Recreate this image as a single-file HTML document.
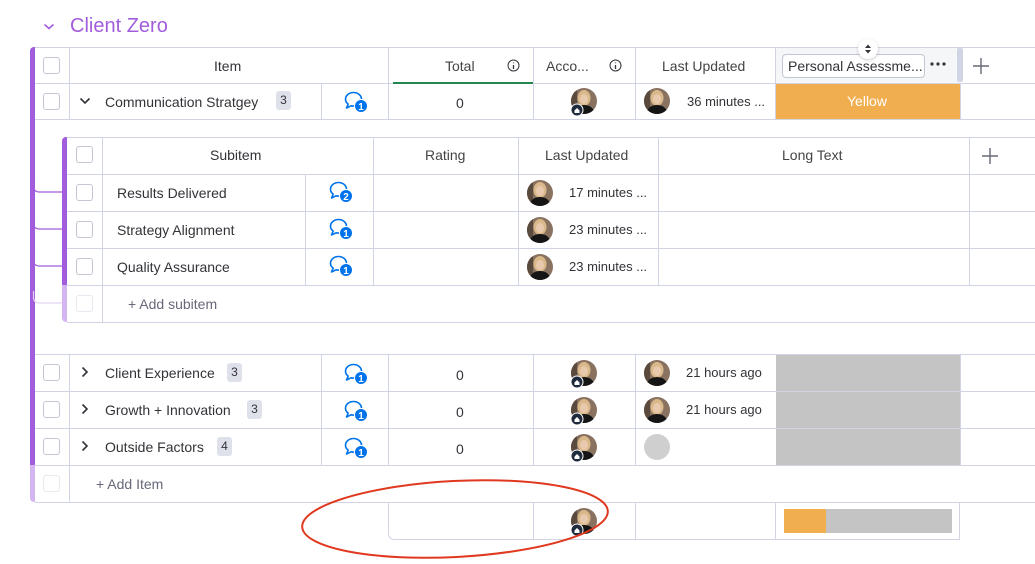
<!DOCTYPE html>
<html><head><meta charset="utf-8"><style>
*{box-sizing:border-box;margin:0;padding:0}
body{width:1035px;height:564px;background:#fff;font-family:"Liberation Sans",sans-serif;color:#323338;position:relative;overflow:hidden;font-size:14px}
.a{position:absolute}
.hl{position:absolute;height:1px;background:#d0d4e4}
.vl{position:absolute;width:1px;background:#d0d4e4}
.t{position:absolute;white-space:nowrap;line-height:1}
.cb{position:absolute;width:17px;height:17px;border:1px solid #c3c6d4;border-radius:3px;background:#fff}
.badge{position:absolute;background:#dfe1ea;border-radius:3px;font-size:12px;width:15px;height:19px;text-align:center;line-height:19px;color:#323338}
.hd{color:#444}
</style></head><body>
<svg width="0" height="0" style="position:absolute"><defs>
<g id="av"><clipPath id="cl"><circle cx="13" cy="13" r="13"/></clipPath><g clip-path="url(#cl)"><rect width="26" height="26" fill="#8a7260"/><rect x="0" y="0" width="6" height="26" fill="#5a4a3e"/><ellipse cx="13" cy="10" rx="6.5" ry="8" fill="#d9b98a"/><ellipse cx="13" cy="11" rx="4" ry="5" fill="#e9c9ae"/><path d="M2 26q2-9 11-9t11 9z" fill="#151515"/></g></g>
<path id="bub" d="M10.5 2.5C6 2.5 2.5 5.5 2.5 9.2c0 2 1 3.7 2.7 4.9L3.5 18l4.6-2.2c.8.2 1.6.3 2.4.3 4.5 0 8-3 8-6.8S15 2.5 10.5 2.5z" stroke="#0073ea" stroke-width="1.6" fill="none" stroke-linejoin="round"/>
</defs></svg>
<!-- title -->
<svg class="a" style="left:43px;top:22px" width="12" height="9"><path d="M1.5 2.5L6 6.5L10.5 2.5" stroke="#a25ddc" stroke-width="1.6" fill="none"/></svg>
<div class="t" style="left:70px;top:16px;font-size:20px;color:#a25ddc">Client Zero</div>

<div class="a" style="left:30px;top:47px;width:5px;height:418px;background:#a25ddc;border-radius:4px 0 0 0"></div>
<div class="a" style="left:30px;top:465px;width:5px;height:37px;background:#d3b6ef;border-radius:0 0 0 4px"></div>
<div class="hl" style="left:35px;top:47px;width:1000px"></div>
<div class="hl" style="left:35px;top:83px;width:1000px"></div>
<div class="hl" style="left:35px;top:119px;width:1000px"></div>
<div class="a" style="left:393px;top:82px;width:140px;height:2px;background:#258750"></div>
<div class="vl" style="left:69px;top:47px;height:72px"></div>
<div class="vl" style="left:388px;top:47px;height:72px"></div>
<div class="vl" style="left:533px;top:47px;height:72px"></div>
<div class="vl" style="left:635px;top:47px;height:72px"></div>
<div class="vl" style="left:775px;top:47px;height:72px"></div>
<div class="vl" style="left:960px;top:84px;height:35px"></div>
<div class="vl" style="left:321px;top:84px;height:35px"></div>
<div class="a" style="left:776px;top:48px;width:184px;height:35px;background:#f5f6f8"></div>
<div class="a" style="left:957px;top:48px;width:6px;height:34px;background:#d0d4e4;border-radius:2px"></div>
<div class="cb" style="left:43px;top:57px"></div>
<div class="t" style="left:214px;top:59px">Item</div>
<div class="t hd" style="left:445px;top:59px">Total</div>
<svg class="a" style="left:507px;top:59px" width="13" height="13"><circle cx="6.5" cy="6.5" r="5.5" stroke="#323338" fill="none"/><path d="M6.5 6v4M6.5 3.5v.8" stroke="#323338" stroke-width="1.3"/></svg>
<div class="t hd" style="left:546px;top:59px">Acco...</div>
<svg class="a" style="left:609px;top:59px" width="13" height="13"><circle cx="6.5" cy="6.5" r="5.5" stroke="#323338" fill="none"/><path d="M6.5 6v4M6.5 3.5v.8" stroke="#323338" stroke-width="1.3"/></svg>
<div class="t hd" style="left:662px;top:59px">Last Updated</div>
<div class="a" style="left:782px;top:54px;width:143px;height:24px;border:1px solid #c3c6d4;border-radius:4px;background:#fff"></div>
<div class="t" style="left:788px;top:59px">Personal Assessme...</div>
<svg class="a" style="left:930px;top:62px" width="16" height="4"><circle cx="2" cy="2" r="1.6" fill="#323338"/><circle cx="8" cy="2" r="1.6" fill="#323338"/><circle cx="14" cy="2" r="1.6" fill="#323338"/></svg>
<div class="a" style="left:858px;top:39px;width:20px;height:20px;border-radius:50%;background:#fff;box-shadow:0 1px 3px rgba(0,0,0,.2)"></div>
<svg class="a" style="left:863px;top:43px" width="10" height="12"><path d="M2 5L5 1.5L8 5ZM2 7L5 10.5L8 7Z" fill="#323338"/></svg>
<svg class="a" style="left:972px;top:57px" width="18" height="18"><path d="M9 1v16M1 9h16" stroke="#676879" stroke-width="1.4"/></svg>

<!-- row1 -->
<div class="cb" style="left:43px;top:93px"></div>
<svg class="a" style="left:79px;top:96px" width="12" height="10"><path d="M1.5 2.5L6 7L10.5 2.5" stroke="#323338" stroke-width="1.6" fill="none"/></svg>
<div class="t" style="left:105px;top:95px">Communication Stratgey</div>
<div class="badge" style="left:276px;top:91px">3</div>
<svg class="a" style="left:343px;top:90px" width="26" height="24"><use href="#bub"/><circle cx="18" cy="16" r="6.5" fill="#0073ea" stroke="#fff"/><text x="18" y="20" font-size="10" fill="#fff" text-anchor="middle" font-family="Liberation Sans" font-weight="bold">1</text></svg>
<div class="t" style="left:456px;top:96px">0</div>
<div class="a" style="left:776px;top:84px;width:184px;height:35px;background:#f0ae4f"></div>
<div class="t" style="left:847px;top:94px;color:#fff">Yellow</div>
<div class="t" style="left:687px;top:95px;font-size:13px">36 minutes ...</div>

<!-- subitem table -->
<div class="a" style="left:33px;top:119px;width:1.5px;height:234px;background:#a25ddc"></div>
<svg class="a" style="left:32px;top:180px" width="31" height="130"><g fill="none" stroke="#a25ddc" stroke-width="1.2"><path d="M1.5 0v6q0 6 6 6h23.5"/><path d="M1.5 37v6q0 6 6 6h23.5"/><path d="M1.5 74v6q0 6 6 6h23.5"/></g><path d="M1.5 111v6q0 6 6 6h23.5" stroke="#e2d3f3" stroke-width="1.2" fill="none"/></svg>
<div class="a" style="left:62px;top:137px;width:5px;height:148px;background:#a25ddc;border-radius:4px 0 0 0"></div>
<div class="a" style="left:62px;top:285px;width:5px;height:37px;background:#d3b6ef;border-radius:0 0 0 4px"></div>
<div class="hl" style="left:67px;top:137px;width:968px"></div>
<div class="hl" style="left:67px;top:174px;width:968px"></div>
<div class="hl" style="left:67px;top:211px;width:968px"></div>
<div class="hl" style="left:67px;top:248px;width:968px"></div>
<div class="hl" style="left:67px;top:285px;width:968px"></div>
<div class="hl" style="left:67px;top:322px;width:968px"></div>
<div class="vl" style="left:102px;top:137px;height:185px"></div>
<div class="vl" style="left:305px;top:174px;height:111px"></div>
<div class="vl" style="left:373px;top:137px;height:148px"></div>
<div class="vl" style="left:518px;top:137px;height:148px"></div>
<div class="vl" style="left:658px;top:137px;height:148px"></div>
<div class="vl" style="left:969px;top:137px;height:148px"></div>
<div class="cb" style="left:76px;top:146px"></div>
<div class="t" style="left:210px;top:148px">Subitem</div>
<div class="t hd" style="left:425px;top:148px">Rating</div>
<div class="t hd" style="left:545px;top:148px">Last Updated</div>
<div class="t hd" style="left:782px;top:148px">Long Text</div>
<svg class="a" style="left:981px;top:147px" width="18" height="18"><path d="M9 1v16M1 9h16" stroke="#676879" stroke-width="1.4"/></svg>

<div class="cb" style="left:76px;top:184px"></div>
<div class="t" style="left:117px;top:186px">Results Delivered</div>
<div class="cb" style="left:76px;top:221px"></div>
<div class="t" style="left:117px;top:223px">Strategy Alignment</div>
<div class="cb" style="left:76px;top:258px"></div>
<div class="t" style="left:117px;top:260px">Quality Assurance</div>
<div class="cb" style="left:76px;top:295px;border-color:#e6e9ef"></div>
<div class="t" style="left:128px;top:297px;color:#676879">+ Add subitem</div>

<svg class="a" style="left:328px;top:180px" width="26" height="24"><use href="#bub"/><circle cx="18" cy="16" r="6.5" fill="#0073ea" stroke="#fff"/><text x="18" y="20" font-size="10" fill="#fff" text-anchor="middle" font-family="Liberation Sans" font-weight="bold">2</text></svg>
<svg class="a" style="left:328px;top:217px" width="26" height="24"><use href="#bub"/><circle cx="18" cy="16" r="6.5" fill="#0073ea" stroke="#fff"/><text x="18" y="20" font-size="10" fill="#fff" text-anchor="middle" font-family="Liberation Sans" font-weight="bold">1</text></svg>
<svg class="a" style="left:328px;top:254px" width="26" height="24"><use href="#bub"/><circle cx="18" cy="16" r="6.5" fill="#0073ea" stroke="#fff"/><text x="18" y="20" font-size="10" fill="#fff" text-anchor="middle" font-family="Liberation Sans" font-weight="bold">1</text></svg>
<div class="t" style="left:569px;top:186px;font-size:13px">17 minutes ...</div>
<div class="t" style="left:569px;top:223px;font-size:13px">23 minutes ...</div>
<div class="t" style="left:569px;top:260px;font-size:13px">23 minutes ...</div>

<!-- lower rows -->
<div class="hl" style="left:35px;top:354px;width:1000px"></div>
<div class="hl" style="left:35px;top:391px;width:1000px"></div>
<div class="hl" style="left:35px;top:428px;width:1000px"></div>
<div class="hl" style="left:35px;top:465px;width:1000px"></div>
<div class="hl" style="left:35px;top:502px;width:1000px"></div>
<div class="vl" style="left:69px;top:354px;height:148px"></div>
<div class="vl" style="left:321px;top:354px;height:111px"></div>
<div class="vl" style="left:388px;top:354px;height:111px"></div>
<div class="vl" style="left:533px;top:354px;height:111px"></div>
<div class="vl" style="left:635px;top:354px;height:111px"></div>
<div class="vl" style="left:960px;top:354px;height:111px"></div>
<div class="a" style="left:776px;top:355px;width:184px;height:110px;background:#c4c4c4"></div>
<div class="hl" style="left:776px;top:391px;width:184px"></div>
<div class="hl" style="left:776px;top:428px;width:184px"></div>

<div class="cb" style="left:43px;top:364px"></div>
<div class="cb" style="left:43px;top:401px"></div>
<div class="cb" style="left:43px;top:438px"></div>
<div class="cb" style="left:43px;top:475px;border-color:#e6e9ef"></div>
<svg class="a" style="left:80px;top:366px" width="10" height="12"><path d="M2.5 1.5L7 6L2.5 10.5" stroke="#323338" stroke-width="1.6" fill="none"/></svg>
<svg class="a" style="left:80px;top:403px" width="10" height="12"><path d="M2.5 1.5L7 6L2.5 10.5" stroke="#323338" stroke-width="1.6" fill="none"/></svg>
<svg class="a" style="left:80px;top:440px" width="10" height="12"><path d="M2.5 1.5L7 6L2.5 10.5" stroke="#323338" stroke-width="1.6" fill="none"/></svg>
<div class="t" style="left:105px;top:366px">Client Experience</div>
<div class="badge" style="left:227px;top:363px">3</div>
<div class="t" style="left:105px;top:403px">Growth + Innovation</div>
<div class="badge" style="left:247px;top:400px">3</div>
<div class="t" style="left:105px;top:440px">Outside Factors</div>
<div class="badge" style="left:217px;top:437px">4</div>
<div class="t" style="left:96px;top:477px;color:#676879">+ Add Item</div>
<svg class="a" style="left:343px;top:362px" width="26" height="24"><use href="#bub"/><circle cx="18" cy="16" r="6.5" fill="#0073ea" stroke="#fff"/><text x="18" y="20" font-size="10" fill="#fff" text-anchor="middle" font-family="Liberation Sans" font-weight="bold">1</text></svg>
<svg class="a" style="left:343px;top:399px" width="26" height="24"><use href="#bub"/><circle cx="18" cy="16" r="6.5" fill="#0073ea" stroke="#fff"/><text x="18" y="20" font-size="10" fill="#fff" text-anchor="middle" font-family="Liberation Sans" font-weight="bold">1</text></svg>
<svg class="a" style="left:343px;top:436px" width="26" height="24"><use href="#bub"/><circle cx="18" cy="16" r="6.5" fill="#0073ea" stroke="#fff"/><text x="18" y="20" font-size="10" fill="#fff" text-anchor="middle" font-family="Liberation Sans" font-weight="bold">1</text></svg>
<div class="t" style="left:456px;top:368px">0</div>
<div class="t" style="left:456px;top:405px">0</div>
<div class="t" style="left:456px;top:442px">0</div>
<div class="t" style="left:686px;top:366px;font-size:13px">21 hours ago</div>
<div class="t" style="left:686px;top:403px;font-size:13px">21 hours ago</div>
<div class="a" style="left:644px;top:434px;width:26px;height:26px;border-radius:50%;background:#cfcfcf"></div>

<!-- summary row -->
<div class="a" style="left:388px;top:502px;width:572px;height:38px;border:1px solid #d0d4e4;border-top:none;border-radius:0 0 0 6px"></div>
<div class="vl" style="left:533px;top:502px;height:38px"></div>
<div class="vl" style="left:635px;top:502px;height:38px"></div>
<div class="vl" style="left:775px;top:502px;height:38px"></div>
<div class="a" style="left:784px;top:509px;width:168px;height:24px;background:#c4c4c4"></div>
<div class="a" style="left:784px;top:509px;width:42px;height:24px;background:#f0ae4f"></div>

<!-- avatars -->
<svg class="a" style="left:571px;top:88px" width="28" height="30"><use href="#av"/><circle cx="6" cy="22" r="6" fill="#1f2a3c" stroke="#fff"/><path d="M3.5 22.5L6 20l2.5 2.5v2.5h-5z" fill="#fff"/></svg>
<svg class="a" style="left:644px;top:88px" width="26" height="26"><use href="#av"/></svg>
<svg class="a" style="left:527px;top:180px" width="26" height="26"><use href="#av"/></svg>
<svg class="a" style="left:527px;top:217px" width="26" height="26"><use href="#av"/></svg>
<svg class="a" style="left:527px;top:254px" width="26" height="26"><use href="#av"/></svg>
<svg class="a" style="left:571px;top:360px" width="28" height="30"><use href="#av"/><circle cx="6" cy="22" r="6" fill="#1f2a3c" stroke="#fff"/><path d="M3.5 22.5L6 20l2.5 2.5v2.5h-5z" fill="#fff"/></svg>
<svg class="a" style="left:571px;top:397px" width="28" height="30"><use href="#av"/><circle cx="6" cy="22" r="6" fill="#1f2a3c" stroke="#fff"/><path d="M3.5 22.5L6 20l2.5 2.5v2.5h-5z" fill="#fff"/></svg>
<svg class="a" style="left:571px;top:434px" width="28" height="30"><use href="#av"/><circle cx="6" cy="22" r="6" fill="#1f2a3c" stroke="#fff"/><path d="M3.5 22.5L6 20l2.5 2.5v2.5h-5z" fill="#fff"/></svg>
<svg class="a" style="left:571px;top:508px" width="28" height="30"><use href="#av"/><circle cx="6" cy="22" r="6" fill="#1f2a3c" stroke="#fff"/><path d="M3.5 22.5L6 20l2.5 2.5v2.5h-5z" fill="#fff"/></svg>
<svg class="a" style="left:644px;top:360px" width="26" height="26"><use href="#av"/></svg>
<svg class="a" style="left:644px;top:397px" width="26" height="26"><use href="#av"/></svg>

<!-- red ellipse -->
<svg class="a" style="left:290px;top:470px" width="330" height="94"><ellipse cx="165" cy="49" rx="153" ry="38" transform="rotate(-3 165 49)" fill="none" stroke="#e0391f" stroke-width="2"/></svg>
</body></html>
